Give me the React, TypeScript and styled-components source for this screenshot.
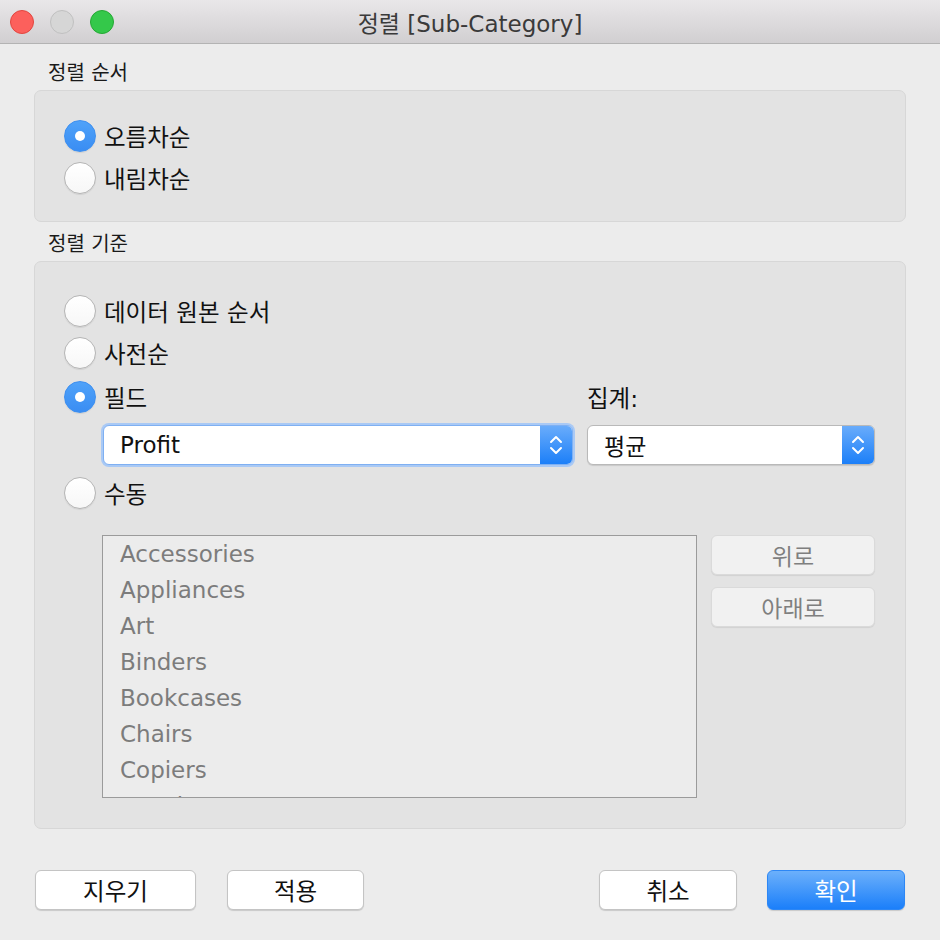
import React, { useState } from 'react';
import styled, { createGlobalStyle } from 'styled-components';

const GlobalStyle = createGlobalStyle`
  html, body {
    margin: 0;
    padding: 0;
    background: #ececec;
  }
  * {
    box-sizing: border-box;
  }
`;

const FONT = `'DejaVu Sans', 'Noto Sans CJK KR', sans-serif`;

const Window = styled.div`
  width: 940px;
  height: 940px;
  display: flex;
  flex-direction: column;
  background: #ececec;
  font-family: ${FONT};
  color: #111;
  overflow: hidden;
`;

const TitleBar = styled.div`
  position: relative;
  height: 44px;
  flex-shrink: 0;
  display: flex;
  align-items: center;
  justify-content: center;
  background: linear-gradient(#e9e7e9, #d1cfd1);
  border-bottom: 1px solid #b3b3b3;
`;

const Lights = styled.div`
  position: absolute;
  left: 10px;
  top: 10px;
  display: flex;
  gap: 16px;
`;

const Light = styled.span<{ $color: string; $border: string }>`
  width: 24px;
  height: 24px;
  border-radius: 50%;
  background: ${(p) => p.$color};
  border: 1px solid ${(p) => p.$border};
`;

const Title = styled.div`
  font-size: 23px;
  color: #3a3a3a;
`;

const Body = styled.div`
  flex: 1;
  padding: 0 34px;
  display: flex;
  flex-direction: column;
`;

const SectionLabel = styled.div<{ $top: number }>`
  font-size: 20px;
  line-height: 24px;
  padding: ${(p) => p.$top}px 0 5px 14px;
  color: #1a1a1a;
`;

const Group = styled.div<{ $padTop: number; $padBottom: number }>`
  background: #e3e3e3;
  border: 1px solid #d7d7d7;
  border-radius: 7px;
  padding: ${(p) => p.$padTop}px 30px ${(p) => p.$padBottom}px 29px;
  display: flex;
  flex-direction: column;
`;

const RadioRow = styled.label<{ $mt?: number }>`
  height: 42px;
  display: flex;
  align-items: center;
  gap: 8px;
  font-size: 23.5px;
  margin-top: ${(p) => p.$mt ?? 0}px;
  cursor: default;
`;

const RadioCircle = styled.span<{ $on: boolean }>`
  width: 32px;
  height: 32px;
  border-radius: 50%;
  flex-shrink: 0;
  display: flex;
  align-items: center;
  justify-content: center;
  background: ${(p) => (p.$on ? 'linear-gradient(#4fa2f9, #3a8df3)' : 'linear-gradient(#ffffff, #f7f7f7)')};
  border: 1px solid ${(p) => (p.$on ? '#3d8ff0' : '#b5b5b5')};
  box-shadow: 0 1px 1px rgba(0, 0, 0, 0.08);
  &::after {
    content: '';
    display: ${(p) => (p.$on ? 'block' : 'none')};
    width: 10px;
    height: 10px;
    border-radius: 50%;
    background: #fff;
  }
`;

const FieldGrid = styled.div<{ $mt?: number }>`
  display: grid;
  grid-template-columns: 1fr 288px;
  column-gap: 14px;
  margin-top: ${(p) => p.$mt ?? 0}px;
  align-items: center;
`;

const AggLabel = styled.div`
  font-size: 23.5px;
`;

const SelectBox = styled.div<{ $focus?: boolean; $indent?: number }>`
  margin-left: ${(p) => p.$indent ?? 0}px;
  height: 40px;
  display: flex;
  align-items: stretch;
  background: #fff;
  border-radius: 6px;
  border: 1px solid ${(p) => (p.$focus ? '#7fb0f2' : '#b9b9b9')};
  box-shadow: ${(p) => (p.$focus ? '0 0 0 2px #a9c9f5' : '0 1px 1px rgba(0,0,0,0.12)')};
  overflow: hidden;
`;

const SelectText = styled.div`
  flex: 1;
  display: flex;
  align-items: center;
  padding-left: 16px;
  font-size: 23px;
  color: #111;
`;

const Stepper = styled.div`
  width: 32px;
  display: flex;
  align-items: center;
  justify-content: center;
  background: linear-gradient(#69acfb, #1c7ff8);
`;

const ListGrid = styled.div`
  display: grid;
  grid-template-columns: 1fr 164px;
  column-gap: 14px;
  margin-top: 21px;
  padding-left: 38px;
  align-items: start;
`;

const ListBox = styled.div`
  height: 263px;
  border: 1px solid #9b9b9b;
  background: #ececec;
  overflow: hidden;
  padding-left: 17px;
`;

const ListItem = styled.div`
  font-size: 23px;
  line-height: 36px;
  color: #7c7c7c;
`;

const SideButtons = styled.div`
  display: flex;
  flex-direction: column;
  gap: 12px;
`;

const SideButton = styled.button`
  height: 40px;
  border: 1px solid #dadada;
  border-radius: 6px;
  background: #f1f1f1;
  color: #7f7f7f;
  font-family: ${FONT};
  font-size: 23px;
  padding: 0;
  box-shadow: 0 1px 1px rgba(0, 0, 0, 0.08);
`;

const Footer = styled.div`
  display: flex;
  align-items: center;
  padding: 41px 1px 0 1px;
`;

const Spacer = styled.div`
  flex: 1;
`;

const PushButton = styled.button<{ $w: number; $primary?: boolean; $ml?: number }>`
  width: ${(p) => p.$w}px;
  height: 40px;
  margin-left: ${(p) => p.$ml ?? 0}px;
  border-radius: 6px;
  padding: 0;
  font-family: ${FONT};
  font-size: 23.5px;
  color: ${(p) => (p.$primary ? '#fff' : '#111')};
  background: ${(p) => (p.$primary ? 'linear-gradient(#6cb0fb, #1b7ffa)' : '#fff')};
  border: 1px solid ${(p) => (p.$primary ? '#2d87f5' : '#c4c4c4')};
  box-shadow: 0 1px 1px rgba(0, 0, 0, 0.15);
`;

const Chevrons = () => (
  <svg width="16" height="26" viewBox="0 0 16 26">
    <path d="M3 10 L8 5 L13 10" fill="none" stroke="#fff" strokeWidth="2" strokeLinecap="round" strokeLinejoin="round" />
    <path d="M3 16 L8 21 L13 16" fill="none" stroke="#fff" strokeWidth="2" strokeLinecap="round" strokeLinejoin="round" />
  </svg>
);

const ITEMS = ['Accessories', 'Appliances', 'Art', 'Binders', 'Bookcases', 'Chairs', 'Copiers', 'Envelopes', 'Fasteners'];

export default function App() {
  const [order, setOrder] = useState('asc');
  const [basis, setBasis] = useState('field');

  return (
    <>
      <GlobalStyle />
      <Window>
        <TitleBar>
          <Lights>
            <Light $color="#fc605c" $border="#e2463f" />
            <Light $color="#d6d6d6" $border="#c0c0c0" />
            <Light $color="#34c84a" $border="#25a834" />
          </Lights>
          <Title>정렬 [Sub-Category]</Title>
        </TitleBar>
        <Body>
          <SectionLabel $top={17}>정렬 순서</SectionLabel>
          <Group $padTop={24} $padBottom={22}>
            <RadioRow onClick={() => setOrder('asc')}>
              <RadioCircle $on={order === 'asc'} />
              오름차순
            </RadioRow>
            <RadioRow onClick={() => setOrder('desc')}>
              <RadioCircle $on={order === 'desc'} />
              내림차순
            </RadioRow>
          </Group>

          <SectionLabel $top={10}>정렬 기준</SectionLabel>
          <Group $padTop={28} $padBottom={30}>
            <RadioRow onClick={() => setBasis('source')}>
              <RadioCircle $on={basis === 'source'} />
              데이터 원본 순서
            </RadioRow>
            <RadioRow onClick={() => setBasis('alpha')}>
              <RadioCircle $on={basis === 'alpha'} />
              사전순
            </RadioRow>
            <FieldGrid $mt={2}>
              <RadioRow onClick={() => setBasis('field')}>
                <RadioCircle $on={basis === 'field'} />
                필드
              </RadioRow>
              <AggLabel>집계:</AggLabel>
            </FieldGrid>
            <FieldGrid $mt={7}>
              <SelectBox $focus $indent={39}>
                <SelectText>Profit</SelectText>
                <Stepper>
                  <Chevrons />
                </Stepper>
              </SelectBox>
              <SelectBox>
                <SelectText>평균</SelectText>
                <Stepper>
                  <Chevrons />
                </Stepper>
              </SelectBox>
            </FieldGrid>
            <RadioRow $mt={7} onClick={() => setBasis('manual')}>
              <RadioCircle $on={basis === 'manual'} />
              수동
            </RadioRow>
            <ListGrid>
              <ListBox>
                {ITEMS.map((item) => (
                  <ListItem key={item}>{item}</ListItem>
                ))}
              </ListBox>
              <SideButtons>
                <SideButton>위로</SideButton>
                <SideButton>아래로</SideButton>
              </SideButtons>
            </ListGrid>
          </Group>

          <Footer>
            <PushButton $w={161}>지우기</PushButton>
            <PushButton $w={137} $ml={31}>적용</PushButton>
            <Spacer />
            <PushButton $w={138}>취소</PushButton>
            <PushButton $w={138} $ml={30} $primary>
              확인
            </PushButton>
          </Footer>
        </Body>
      </Window>
    </>
  );
}
